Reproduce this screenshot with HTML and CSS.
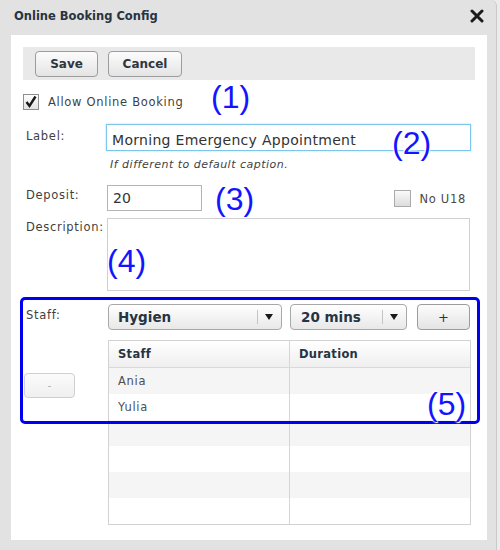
FILE: index.html
```html
<!DOCTYPE html>
<html>
<head>
<meta charset="utf-8">
<link rel="stylesheet" href="styles.css">
</head>
<body>
<div class="dialog">
  <div class="titlebar">
    <span class="title">Online Booking Config</span>
    <svg class="close" width="14" height="14" viewBox="0 0 14 14"><path d="M2 2 L12 12 M12 2 L2 12" stroke="#1c1c1c" stroke-width="3" stroke-linecap="round"/></svg>
  </div>
  <div class="panel">
    <div class="toolbar">
      <button class="btn save">Save</button>
      <button class="btn cancel">Cancel</button>
    </div>
    <div class="allow">
      <span class="cb checked"><svg width="14" height="14" viewBox="0 0 14 14"><path d="M2.5 7 L5.5 11 L11.5 1.5" fill="none" stroke="#1a1a1a" stroke-width="2.4"/></svg></span>
      <span class="allow-text">Allow Online Booking</span>
    </div>
    <div class="row row-label">
      <div class="lbl">Label:</div>
      <div class="field">
        <div class="input focus">Morning Emergency Appointment</div>
        <div class="hint">If different to default caption.</div>
      </div>
    </div>
    <div class="row row-deposit">
      <div class="lbl">Deposit:</div>
      <div class="field deposit-field">
        <div class="input small">20</div>
        <div class="u18"><span class="cb plain"></span><span>No U18</span></div>
      </div>
    </div>
    <div class="row row-desc">
      <div class="lbl">Description:</div>
      <div class="field">
        <div class="textarea"></div>
      </div>
    </div>
    <div class="row row-staff">
      <div class="lbl-col">
        <div class="lbl">Staff:</div>
        <button class="btn minus">-</button>
      </div>
      <div class="field">
        <div class="selects">
          <div class="select sel-staff"><span class="sel-text">Hygien</span><span class="sel-arrow"><span class="tri"></span></span></div>
          <div class="select sel-dur"><span class="sel-text">20 mins</span><span class="sel-arrow"><span class="tri"></span></span></div>
          <button class="btn plus">+</button>
        </div>
        <div class="grid">
          <div class="grow head"><div class="c1">Staff</div><div class="c2">Duration</div></div>
          <div class="grow odd"><div class="c1">Ania</div><div class="c2"></div></div>
          <div class="grow"><div class="c1">Yulia</div><div class="c2"></div></div>
          <div class="grow odd"><div class="c1"></div><div class="c2"></div></div>
          <div class="grow"><div class="c1"></div><div class="c2"></div></div>
          <div class="grow odd"><div class="c1"></div><div class="c2"></div></div>
          <div class="grow"><div class="c1"></div><div class="c2"></div></div>
        </div>
      </div>
    </div>
  </div>
  <div class="hl-box"></div>
  <span class="note n1">(1)</span>
  <span class="note n2">(2)</span>
  <span class="note n3">(3)</span>
  <span class="note n4">(4)</span>
  <span class="note n5">(5)</span>
</div>
</body>
</html>
```
FILE: styles.css
```css
* { box-sizing: border-box; }
html, body { margin: 0; padding: 0; }
body {
  background: #ececec;
  font-family: "DejaVu Sans", Verdana, sans-serif;
  font-size: 11.5px;
  color: #3f3f3f;
}
.dialog {
  position: relative;
  width: 497px;
  height: 550px;
  background: #e2e2e2;
  border-right: 1px solid #c9c9c9;
  border-top-right-radius: 6px;
}
.titlebar {
  height: 35px;
  display: flex;
  align-items: center;
  justify-content: space-between;
  padding: 0 12px 3px 14px;
}
.title {
  font-weight: bold;
  font-size: 11.5px;
  color: #263443;
}
.close { display: block; }
.panel {
  margin: 0 9px 0 11px;
  height: 505px;
  background: #fff;
  padding: 12px 12px 0 12px;
}
.toolbar {
  height: 33px;
  background: #e9e9e9;
  display: flex;
  align-items: center;
  gap: 10px;
  padding: 0 12px;
}
.btn {
  font-family: "DejaVu Sans", Verdana, sans-serif;
  height: 26px;
  border: 1px solid #9c9c9c;
  border-radius: 4px;
  background: linear-gradient(#fcfcfc, #e4e4e4);
  font-weight: bold;
  font-size: 12px;
  color: #2f3640;
  padding: 0;
  margin: 0;
}
.save { width: 63px; }
.cancel { width: 74px; }
.allow {
  margin-top: 14px;
  height: 16px;
  display: flex;
  align-items: center;
  gap: 9px;
}
.allow-text { letter-spacing: 0.7px; color: #3f3f3f; }
.cb {
  display: flex;
  align-items: center;
  justify-content: center;
  width: 16px;
  height: 16px;
  border: 1px solid #8e8e8e;
  background: linear-gradient(#ffffff, #e2e2e2);
}
.cb.plain {
  width: 17px;
  height: 17px;
  border-color: #ababab;
  background: linear-gradient(#fafafa, #dcdcdc);
}
.row {
  display: grid;
  grid-template-columns: 84px 1fr;
  padding-right: 4px;
}
.lbl {
  padding-left: 3px;
  letter-spacing: 0.7px;
  line-height: 13px;
  color: #3f3f3f;
}
.row-label { margin-top: 14px; }
.row-label .lbl { padding-top: 6px; }
.input {
  height: 27px;
  border: 1px solid #b8b8b8;
  padding: 0 5px;
  font-size: 14px;
  letter-spacing: 0.3px;
  color: #333;
  display: flex;
  align-items: center;
}
.input.focus {
  margin-left: -1px;
  border-color: #7ec4ed;
  box-shadow: 0 0 2px #a9dbf7;
  padding-top: 4px;
}
.hint {
  margin-top: 7px;
  padding-left: 3px;
  font-style: italic;
  font-size: 11px;
  line-height: 13px;
  letter-spacing: 0.5px;
  color: #3f3f3f;
}
.row-deposit { margin-top: 14px; }
.row-deposit .lbl { padding-top: 4px; }
.deposit-field {
  display: flex;
  align-items: center;
  justify-content: space-between;
}
.input.small {
  width: 95px;
  height: 26px;
  border-color: #b4b4b4;
  letter-spacing: 0;
}
.u18 {
  display: flex;
  align-items: center;
  gap: 8px;
  margin-right: 5px;
  letter-spacing: 0.7px;
  color: #4a4a4a;
  padding-top: 1px;
}
.row-desc { margin-top: 7px; }
.row-desc .lbl { padding-top: 3px; }
.textarea {
  height: 73px;
  border: 1px solid #d0d0d0;
  margin-right: 1px;
}
.row-staff { margin-top: 13px; }
.lbl-col { display: flex; flex-direction: column; align-items: flex-start; }
.row-staff .lbl { padding-top: 5px; }
.minus {
  margin-top: 51px;
  margin-left: 1px;
  width: 51px;
  height: 25px;
  border-color: #cfcfcf;
  background: linear-gradient(#fbfbfb, #efefef);
  color: #b0b0b0;
  font-weight: normal;
  font-size: 11px;
}
.selects {
  display: flex;
  gap: 8px;
  padding-left: 1px;
}
.select {
  height: 26px;
  border: 1px solid #a8a8a8;
  border-radius: 4px;
  background: linear-gradient(#ffffff, #e8e8e8);
  display: flex;
  align-items: center;
  justify-content: space-between;
  font-weight: bold;
  font-size: 13.5px;
  color: #263443;
}
.sel-staff { width: 174px; padding-left: 9px; }
.sel-dur { width: 117px; padding-left: 10px; }
.sel-arrow {
  width: 24px;
  height: 100%;
  display: flex;
  align-items: center;
  justify-content: center;
  position: relative;
}
.sel-arrow::before {
  content: "";
  position: absolute;
  left: 0;
  top: 5px;
  bottom: 5px;
  border-left: 1px solid #c4c4c4;
}
.tri {
  width: 0;
  height: 0;
  border-left: 4px solid transparent;
  border-right: 4px solid transparent;
  border-top: 6px solid #1a1a1a;
}
.plus {
  margin-left: 2px;
  width: 53px;
  font-weight: normal;
  font-size: 13px;
  color: #333;
}
.grid {
  margin-top: 10px;
  margin-left: 1px;
  width: 363px;
  border: 1px solid #d2d2d2;
}
.grow {
  display: grid;
  grid-template-columns: 181px 1fr;
  height: 26px;
  background: #fff;
}
.grow.odd { background: #f5f5f5; }
.grow.head {
  height: 26px;
  background: linear-gradient(#ffffff, #efefef);
  border-bottom: 1px solid #dadada;
  box-sizing: content-box;
  font-weight: bold;
}
.c1, .c2 {
  display: flex;
  align-items: center;
  padding-left: 9px;
}
.c1 { border-right: 1px solid #d6d6d6; }
.grow .c1, .grow .c2 { letter-spacing: 0.7px; color: #4f4f4f; }
.grow.head .c1, .grow.head .c2 { letter-spacing: 0.3px; color: #263443; }
.hl-box {
  position: absolute;
  left: 20px;
  top: 297px;
  width: 460px;
  height: 127px;
  border: 3px solid #0000ee;
  border-radius: 5px;
}
.note {
  position: absolute;
  font-family: "Liberation Sans", Arial, sans-serif;
  font-size: 32px;
  line-height: 32px;
  color: #1414ff;
  text-shadow: 0 0 2px #fff, 0 0 2px #fff, 1px 1px 1px #fff, -1px -1px 1px #fff;
}
.n1 { left: 211px; top: 81px; }
.n2 { left: 392px; top: 127px; }
.n3 { left: 215px; top: 183px; }
.n4 { left: 107px; top: 245px; }
.n5 { left: 427px; top: 388px; }
```
